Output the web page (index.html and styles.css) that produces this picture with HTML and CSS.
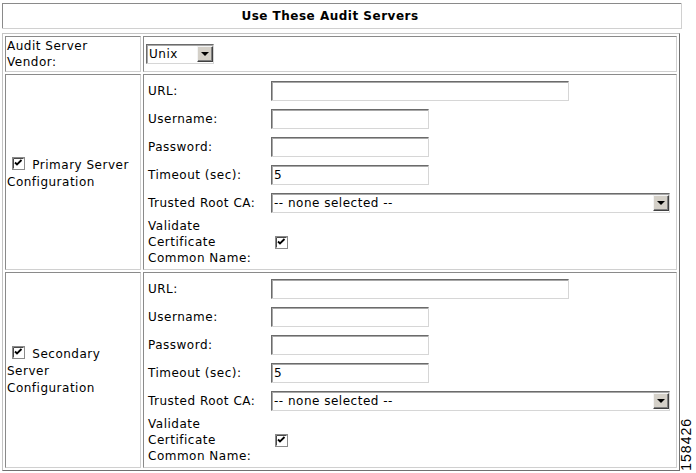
FILE: index.html
```html
<!DOCTYPE html>
<html>
    <head>
        <meta charset="utf-8">
        <title>Use These Audit Servers</title>
        <link rel="stylesheet" href="styles.css">
    </head>
    <body>
        <div class="page">
            <table class="banner">
                <tr>
                    <td>Use These Audit Servers</td>
                </tr>
            </table>
            <table class="audit">
                <tr>
                    <td class="side">Audit Server<br>Vendor:</td>
                    <td class="main">
                        <span class="pick pick-small">
                            <select>
                                <option>Unix</option>
                            </select>
                            <span class="pick-btn"></span>
                        </span>
                    </td>
                </tr>
                <tr>
                    <td class="side side-check">
                        <svg class="tick tick-side" width="13" height="13" viewBox="0 0 13 13"><rect x="0.5" y="0.5" width="12" height="12" fill="#fff" stroke="#8a8a8a"/><path d="M1.5 11.5V1.5h10" fill="none" stroke="#4a4a4a"/><path d="M3 5.5l2 2 4.5-4.5" fill="none" stroke="#000" stroke-width="1.8"/></svg> Primary Server<br>Configuration
                    </td>
                    <td class="main">
                        <table class="fields">
                            <tr>
                                <td class="label">URL:</td>
                                <td class="entry"><input type="text" class="box box-long"></td>
                            </tr>
                            <tr>
                                <td class="label">Username:</td>
                                <td class="entry"><input type="text" class="box box-short"></td>
                            </tr>
                            <tr>
                                <td class="label">Password:</td>
                                <td class="entry"><input type="password" class="box box-short"></td>
                            </tr>
                            <tr>
                                <td class="label">Timeout (sec):</td>
                                <td class="entry"><input type="text" class="box box-short" value="5"></td>
                            </tr>
                            <tr>
                                <td class="label">Trusted Root CA:</td>
                                <td class="entry">
                                    <span class="pick pick-wide">
                                        <select>
                                            <option>-- none selected --</option>
                                        </select>
                                        <span class="pick-btn"></span>
                                    </span>
                                </td>
                            </tr>
                            <tr class="wrap">
                                <td class="label">Validate<br>Certificate<br>Common Name:</td>
                                <td class="entry">
                                    <svg class="tick tick-field" width="13" height="13" viewBox="0 0 13 13"><rect x="0.5" y="0.5" width="12" height="12" fill="#fff" stroke="#8a8a8a"/><path d="M1.5 11.5V1.5h10" fill="none" stroke="#4a4a4a"/><path d="M3 5.5l2 2 4.5-4.5" fill="none" stroke="#000" stroke-width="1.8"/></svg>
                                </td>
                            </tr>
                        </table>
                    </td>
                </tr>
                <tr>
                    <td class="side side-check">
                        <svg class="tick tick-side" width="13" height="13" viewBox="0 0 13 13"><rect x="0.5" y="0.5" width="12" height="12" fill="#fff" stroke="#8a8a8a"/><path d="M1.5 11.5V1.5h10" fill="none" stroke="#4a4a4a"/><path d="M3 5.5l2 2 4.5-4.5" fill="none" stroke="#000" stroke-width="1.8"/></svg> Secondary<br>Server<br>Configuration
                    </td>
                    <td class="main">
                        <table class="fields">
                            <tr>
                                <td class="label">URL:</td>
                                <td class="entry"><input type="text" class="box box-long"></td>
                            </tr>
                            <tr>
                                <td class="label">Username:</td>
                                <td class="entry"><input type="text" class="box box-short"></td>
                            </tr>
                            <tr>
                                <td class="label">Password:</td>
                                <td class="entry"><input type="password" class="box box-short"></td>
                            </tr>
                            <tr>
                                <td class="label">Timeout (sec):</td>
                                <td class="entry"><input type="text" class="box box-short" value="5"></td>
                            </tr>
                            <tr>
                                <td class="label">Trusted Root CA:</td>
                                <td class="entry">
                                    <span class="pick pick-wide">
                                        <select>
                                            <option>-- none selected --</option>
                                        </select>
                                        <span class="pick-btn"></span>
                                    </span>
                                </td>
                            </tr>
                            <tr class="wrap">
                                <td class="label">Validate<br>Certificate<br>Common Name:</td>
                                <td class="entry">
                                    <svg class="tick tick-field" width="13" height="13" viewBox="0 0 13 13"><rect x="0.5" y="0.5" width="12" height="12" fill="#fff" stroke="#8a8a8a"/><path d="M1.5 11.5V1.5h10" fill="none" stroke="#4a4a4a"/><path d="M3 5.5l2 2 4.5-4.5" fill="none" stroke="#000" stroke-width="1.8"/></svg>
                                </td>
                            </tr>
                        </table>
                    </td>
                </tr>
            </table>
            <div class="figno">158426</div>
        </div>
    </body>
</html>
```

FILE: styles.css
```css
body {
    margin: 0;
    font: 12px/16px "DejaVu Sans", Verdana, sans-serif;
    letter-spacing: 0.5px;
    color: #000;
    background: #fff;
}
.page {
    position: relative;
    height: 473px;
    box-sizing: border-box;
    padding: 3px 0 0 2px;
    overflow: hidden;
}
.banner {
    width: 680px;
    border-collapse: collapse;
}
.banner td {
    height: 24px;
    padding: 0 24px 0 0;
    text-align: center;
    font-weight: bold;
    border: 1px solid;
    border-color: #8a8a8a #d0d0d0 #d0d0d0 #8a8a8a;
}
.audit {
    width: 678px;
    margin-top: 4px;
    border: 1px solid;
    border-color: #c4c4c4 #707070 #707070 #c4c4c4;
    border-spacing: 2px;
}
.audit > tbody > tr > td {
    border: 1px solid;
    border-color: #8a8a8a #d0d0d0 #d0d0d0 #8a8a8a;
    padding: 1px;
}
.audit td.side {
    width: 132px;
}
.audit td.side-check {
    line-height: 17px;
    padding-top: 4px;
}
.fields {
    border-spacing: 2px;
}
.fields td {
    padding: 3px 1px;
}
.fields td.label {
    width: 120px;
}
.fields td.entry {
    padding: 3px 0;
}
.fields tr.wrap td {
    padding-top: 0;
    padding-bottom: 0;
}
.box {
    height: 20px;
    box-sizing: border-box;
    margin: 0;
    padding: 0 2px;
    font: 12px "DejaVu Sans", Verdana, sans-serif;
    letter-spacing: 0.5px;
    border: 1px solid;
    border-color: #6b6b6b #d6d6d6 #d6d6d6 #6b6b6b;
    box-shadow: inset 1px 1px 0 #a8a8a8;
    vertical-align: middle;
    outline: none;
}
.box-long {
    width: 298px;
}
.box-short {
    width: 158px;
}
.pick {
    position: relative;
    display: inline-block;
    vertical-align: middle;
}
.audit td.main > .pick {
    margin-left: 1px;
}
.pick select {
    -webkit-appearance: none;
    appearance: none;
    display: block;
    height: 20px;
    box-sizing: border-box;
    margin: 0;
    padding: 0 20px 0 2px;
    font: 12px "DejaVu Sans", Verdana, sans-serif;
    letter-spacing: 0.5px;
    color: #000;
    background: #fff;
    border: 1px solid;
    border-color: #6b6b6b #d6d6d6 #d6d6d6 #6b6b6b;
    box-shadow: inset 1px 1px 0 #a8a8a8;
    border-radius: 0;
    outline: none;
}
.pick-small select {
    width: 68px;
}
.pick-wide select {
    width: 399px;
}
.pick-btn {
    position: absolute;
    top: 2px;
    right: 1px;
    width: 16px;
    height: 16px;
    box-sizing: border-box;
    background: #d4d0c8;
    border: 1px solid;
    border-color: #f4f4f4 #404040 #404040 #f4f4f4;
    box-shadow: inset -1px -1px 0 #808080;
}
.pick-btn::after {
    content: "";
    position: absolute;
    left: 3px;
    top: 5px;
    border-top: 4px solid #000;
    border-left: 4px solid transparent;
    border-right: 4px solid transparent;
}
.tick {
    vertical-align: -1px;
}
.tick-side {
    margin: 0 3px 0 5px;
}
.tick-field {
    margin-left: 4px;
    vertical-align: middle;
}
.figno {
    position: absolute;
    right: 3px;
    bottom: 2px;
    writing-mode: vertical-rl;
    transform: rotate(180deg);
    font: 14px/14px "Liberation Sans", Arial, sans-serif;
    letter-spacing: 1px;
}
```
